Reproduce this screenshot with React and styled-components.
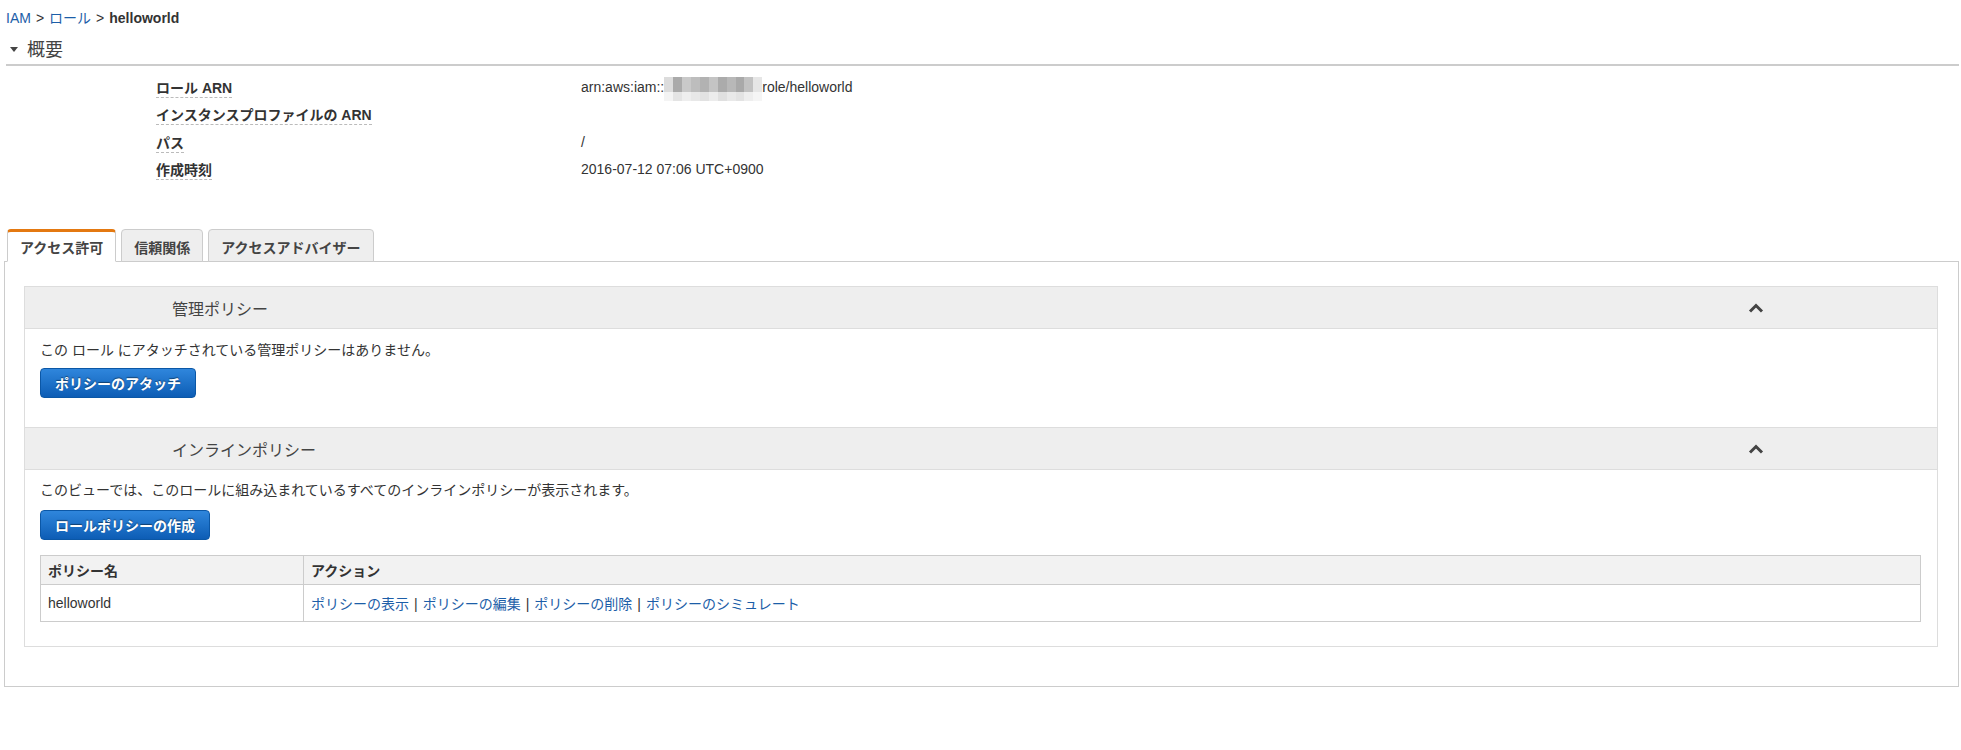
import React from 'react'
import styled, { createGlobalStyle } from 'styled-components'

const GlobalStyle = createGlobalStyle`
  html, body {
    margin: 0;
    padding: 0;
    background: #fff;
  }
  body {
    font-family: "Liberation Sans", "Noto Sans CJK JP", sans-serif;
    font-size: 14px;
    color: #333;
  }
`

const details = [
  { label: 'ロール ARN', value: 'arn' },
  { label: 'インスタンスプロファイルの ARN', value: '' },
  { label: 'パス', value: '/' },
  { label: '作成時刻', value: '2016-07-12 07:06 UTC+0900' },
]

const blurTop = ['#dcdcdc', '#aaa', '#c9c9c9', '#bdbdbd', '#b2b2b2', '#c4c4c4', '#ababab', '#b8b8b8', '#a9a9a9', '#c2c2c2', '#e6e6e6']
const blurBottom = ['#f4f4f4', '#e4e4e4', '#eeeeee', '#e8e8e8', '#e2e2e2', '#ececec', '#e0e0e0', '#e9e9e9', '#e3e3e3', '#eeeeee', '#f5f5f5']

const actions = ['ポリシーの表示', 'ポリシーの編集', 'ポリシーの削除', 'ポリシーのシミュレート']

const Chevron = () => (
  <svg width="16" height="10" viewBox="0 0 16 10">
    <polyline points="2,8.5 8,2.5 14,8.5" fill="none" stroke="#444" strokeWidth="3" />
  </svg>
)

const App = () => {
  return (
    <Page>
      <GlobalStyle />
      <Breadcrumb>
        <Link>IAM</Link>
        <Sep>&gt;</Sep>
        <Link>ロール</Link>
        <Sep>&gt;</Sep>
        <Current>helloworld</Current>
      </Breadcrumb>

      <SummaryHeader>
        <Caret />
        <SummaryTitle>概要</SummaryTitle>
      </SummaryHeader>

      <DetailList>
        {details.map((d) => (
          <DetailRow key={d.label}>
            <DetailLabel><span>{d.label}</span></DetailLabel>
            <DetailValue>
              {d.value === 'arn' ? (
                <>
                  arn:aws:iam::
                  <Blur>
                    <BlurRow $h={15}>
                      {blurTop.map((c, i) => <BlurCell key={i} style={{ background: c }} />)}
                    </BlurRow>
                    <BlurRow $h={9}>
                      {blurBottom.map((c, i) => <BlurCell key={i} style={{ background: c }} />)}
                    </BlurRow>
                  </Blur>
                  role/helloworld
                </>
              ) : d.value}
            </DetailValue>
          </DetailRow>
        ))}
      </DetailList>

      <Tabs>
        <Tab $active>アクセス許可</Tab>
        <Tab>信頼関係</Tab>
        <Tab>アクセスアドバイザー</Tab>
      </Tabs>

      <Panel>
        <Section>
          <SectionHeader>
            <SectionTitle>管理ポリシー</SectionTitle>
            <Chevron />
          </SectionHeader>
          <SectionBody $top={11} $gap={8} $bottom={29}>
            <BodyText>この ロール にアタッチされている管理ポリシーはありません。</BodyText>
            <BlueButton>ポリシーのアタッチ</BlueButton>
          </SectionBody>

          <SectionHeader $divider>
            <SectionTitle>インラインポリシー</SectionTitle>
            <Chevron />
          </SectionHeader>
          <SectionBody $top={10} $gap={10} $bottom={24}>
            <BodyText>このビューでは、このロールに組み込まれているすべてのインラインポリシーが表示されます。</BodyText>
            <BlueButton>ロールポリシーの作成</BlueButton>
            <Table>
              <thead>
                <tr>
                  <Th $w={248}>ポリシー名</Th>
                  <Th>アクション</Th>
                </tr>
              </thead>
              <tbody>
                <tr>
                  <Td>helloworld</Td>
                  <Td>
                    {actions.map((a, i) => (
                      <React.Fragment key={a}>
                        {i > 0 && <Pipe>|</Pipe>}
                        <Link>{a}</Link>
                      </React.Fragment>
                    ))}
                  </Td>
                </tr>
              </tbody>
            </Table>
          </SectionBody>
        </Section>
      </Panel>
    </Page>
  )
}

const Page = styled.div`
  padding: 0 2px 0 4px;
`

const Breadcrumb = styled.div`
  display: flex;
  align-items: center;
  gap: 5px;
  height: 20px;
  padding: 8px 0 0 2px;
  font-size: 14px;
  line-height: 20px;
`

const Link = styled.a`
  color: #1c5ea8;
  text-decoration: none;
  cursor: pointer;
`

const Sep = styled.span`
  color: #333;
`

const Current = styled.span`
  font-weight: bold;
  color: #333;
`

const SummaryHeader = styled.div`
  display: flex;
  align-items: flex-end;
  gap: 9px;
  height: 38px;
  margin-left: 2px;
  padding: 0 0 2px 4px;
  box-sizing: border-box;
  border-bottom: 2px solid #cccccc;
`

const Caret = styled.span`
  width: 0;
  height: 0;
  border-left: 4px solid transparent;
  border-right: 4px solid transparent;
  border-top: 5px solid #444;
  margin-bottom: 10px;
`

const SummaryTitle = styled.span`
  font-size: 18px;
  color: #444;
  line-height: 24px;
`

const DetailList = styled.div`
  display: flex;
  flex-direction: column;
  padding: 7px 0 0 152px;
`

const DetailRow = styled.div`
  display: grid;
  grid-template-columns: 425px 1fr;
  align-items: center;
  height: 27.5px;
`

const DetailLabel = styled.div`
  font-weight: bold;
  color: #333;
  span {
    border-bottom: 1px dashed #bbb;
    padding-bottom: 1px;
  }
`

const DetailValue = styled.div`
  display: flex;
  align-items: center;
  color: #333;
`

const Blur = styled.span`
  display: inline-flex;
  flex-direction: column;
  width: 98px;
  margin-top: 4px;
`

const BlurRow = styled.span`
  display: flex;
  height: ${(p) => p.$h}px;
`

const BlurCell = styled.span`
  flex: 1;
  filter: blur(0.6px);
`

const Tabs = styled.div`
  display: flex;
  align-items: flex-end;
  gap: 5px;
  margin-top: 46px;
  padding-left: 3px;
  position: relative;
  z-index: 1;
`

const Tab = styled.div`
  height: 33px;
  box-sizing: border-box;
  padding: 0 12px;
  display: flex;
  align-items: center;
  font-size: 14px;
  font-weight: bold;
  color: #444;
  border: 1px solid #cccccc;
  border-radius: 4px 4px 0 0;
  background: ${(p) => (p.$active ? '#fff' : '#eeeeee')};
  border-top: ${(p) => (p.$active ? '3px solid #e47911' : '1px solid #cccccc')};
  border-bottom: ${(p) => (p.$active ? '1px solid #fff' : '1px solid #cccccc')};
  padding-top: ${(p) => (p.$active ? '0' : '2px')};
  margin-bottom: -1px;
`

const Panel = styled.div`
  border: 1px solid #cccccc;
  padding: 24px 20px 39px 19px;
`

const Section = styled.div`
  border: 1px solid #dddddd;
`

const SectionHeader = styled.div`
  display: flex;
  align-items: center;
  justify-content: space-between;
  height: 41px;
  padding: 0 173px 0 147px;
  background: #eeeeee;
  border-bottom: 1px solid #dddddd;
  border-top: ${(p) => (p.$divider ? '1px solid #dddddd' : 'none')};
`

const SectionTitle = styled.span`
  font-size: 16px;
  color: #444;
`

const SectionBody = styled.div`
  display: flex;
  flex-direction: column;
  align-items: flex-start;
  gap: ${(p) => p.$gap}px;
  padding: ${(p) => p.$top}px 16px ${(p) => p.$bottom}px 15px;
`

const BodyText = styled.div`
  font-size: 14px;
  line-height: 20px;
  color: #333;
`

const BlueButton = styled.button`
  height: 30px;
  padding: 0 14px;
  font-family: inherit;
  font-size: 14px;
  font-weight: bold;
  color: #fff;
  text-shadow: 0 -1px 1px rgba(0, 0, 0, 0.45);
  background: linear-gradient(#2f86dc, #0d5db5);
  border: 1px solid #0b57a6;
  border-radius: 4px;
  cursor: pointer;
`

const Table = styled.table`
  width: 100%;
  margin-top: 5px;
  border-collapse: collapse;
  border: 1px solid #cccccc;
  font-size: 14px;
`

const Th = styled.th`
  width: ${(p) => (p.$w ? `${p.$w}px` : 'auto')};
  height: 28px;
  padding: 0 7px;
  text-align: left;
  font-weight: bold;
  color: #333;
  background: #f2f2f2;
  border: 1px solid #cccccc;
`

const Td = styled.td`
  height: 36px;
  padding: 0 7px;
  color: #333;
  border: 1px solid #cccccc;
`

const Pipe = styled.span`
  color: #333;
  margin: 0 5px;
`

export default App
